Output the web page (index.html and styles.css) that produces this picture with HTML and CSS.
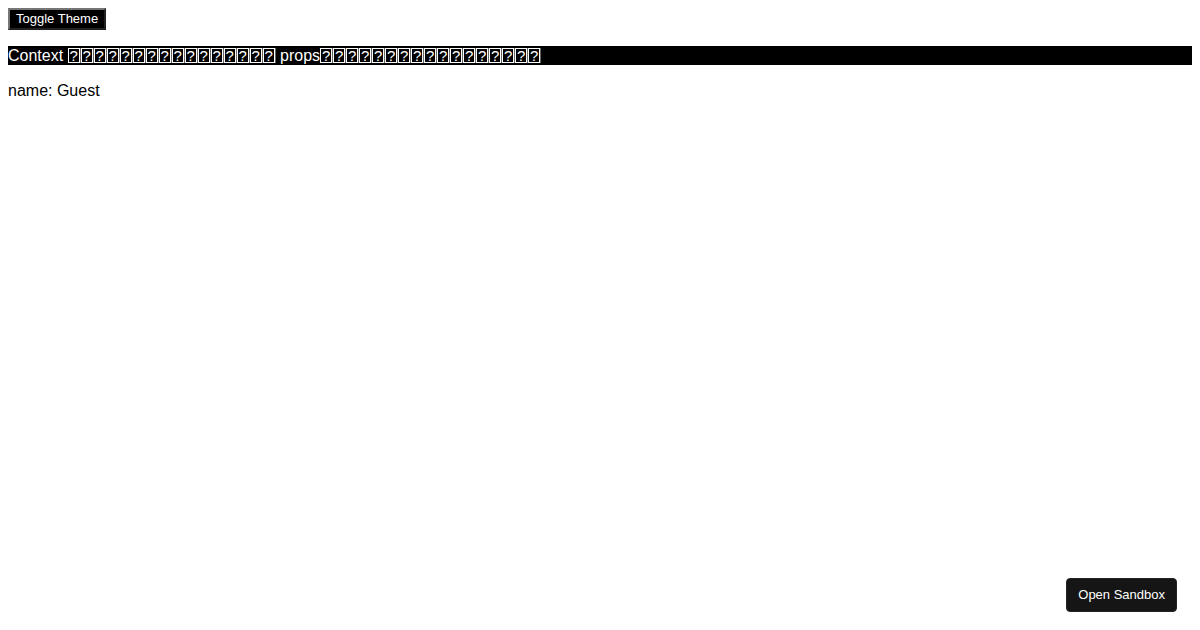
FILE: index.html
```html
<!DOCTYPE html>
<html lang="ja">
<head>
    <meta charset="UTF-8">
    <meta name="viewport" content="width=device-width, initial-scale=1.0">
    <title>Toggle Theme</title>
    <link rel="stylesheet" href="styles.css">
</head>
<body>
    <main>
        <button type="button" class="toggle">Toggle Theme</button>
        <p class="themed">Context <span class="glyphs"><i>?</i><i>?</i><i>?</i><i>?</i><i>?</i><i>?</i><i>?</i><i>?</i><i>?</i><i>?</i><i>?</i><i>?</i><i>?</i><i>?</i><i>?</i><i>?</i></span> props<span class="glyphs"><i>?</i><i>?</i><i>?</i><i>?</i><i>?</i><i>?</i><i>?</i><i>?</i><i>?</i><i>?</i><i>?</i><i>?</i><i>?</i><i>?</i><i>?</i><i>?</i><i>?</i></span></p>
        <p>name: Guest</p>
    </main>
    <a class="open-sandbox" href="#">Open Sandbox</a>
</body>
</html>
```

FILE: styles.css
```css
body {
    font-family: "Liberation Sans", Arial, sans-serif;
    line-height: 19px;
    background-color: #fff;
    color: #000;
}
p {
    margin: 16px 0;
}
.toggle {
    display: block;
    font-family: inherit;
    font-size: 13px;
    line-height: 16px;
    padding: 1px 6px;
    height: 22px;
    background-color: #000;
    color: #fff;
    border: 2px solid;
    border-color: #767676 #212121 #212121 #767676;
}
.themed {
    background-color: #000;
    color: #fff;
}
/* missing glyph boxes */
.glyphs i {
    display: inline-block;
    box-sizing: border-box;
    width: 12px;
    height: 15px;
    margin: 2px 1px 2px 0;
    border: 1px solid #fff;
    box-shadow: 1px 0 0 #666;
    font-size: 15px;
    font-style: normal;
    line-height: 14px;
    text-align: center;
    vertical-align: top;
}
.open-sandbox {
    position: fixed;
    right: 23px;
    bottom: 18px;
    box-sizing: border-box;
    height: 34px;
    padding: 0 11px;
    border: 1px solid #242424;
    border-radius: 4px;
    background-color: #151515;
    color: #fff;
    font-size: 13px;
    line-height: 32px;
    text-decoration: none;
}
```
